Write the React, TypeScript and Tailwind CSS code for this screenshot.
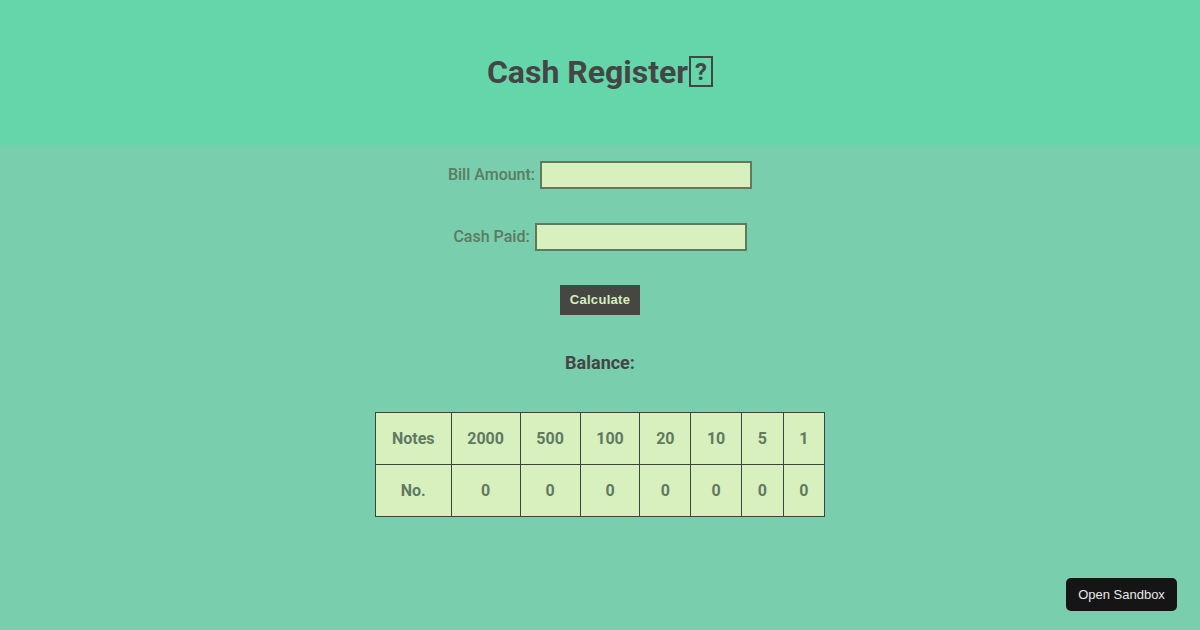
import { useState } from "react";

const notes = [2000, 500, 100, 20, 10, 5, 1];

export default function App() {
	const [bill, setBill] = useState("");
	const [cash, setCash] = useState("");
	const [counts, setCounts] = useState<number[]>(notes.map(() => 0));

	const calculate = () => {
		let rest = Number(cash) - Number(bill);
		if (!(rest > 0)) {
			setCounts(notes.map(() => 0));
			return;
		}
		setCounts(
			notes.map((n) => {
				const c = Math.floor(rest / n);
				rest -= c * n;
				return c;
			}),
		);
	};

	return (
		<div className="min-h-[630px] bg-[#79cead] font-['Roboto',sans-serif]">
			{/* Header */}
			<header className="flex h-[145px] items-center justify-center bg-[#64d6a9] pb-[2px]">
				<h1 className="flex items-center text-[32px] font-bold text-[#454545]">
					Cash Register
					{/* missing-glyph box */}
					<span className="ml-[1px] flex h-[31px] w-[24px] items-center justify-center border-2 border-[#454545] text-[24px] leading-none">
						?
					</span>
				</h1>
			</header>

			{/* Form */}
			<main className="flex flex-col items-center">
				<div className="mt-4 flex items-center gap-[5px]">
					<label className="text-base font-medium text-[#5c7b61]">Bill Amount:</label>
					<input
						value={bill}
						onChange={(e) => setBill(e.target.value)}
						className="h-[28px] w-[212px] border-2 border-[#5f7a5c] bg-[#d8efbe] px-1 outline-none"
					/>
				</div>
				<div className="mt-[34px] flex items-center gap-[5px]">
					<label className="text-base font-medium text-[#5c7b61]">Cash Paid:</label>
					<input
						value={cash}
						onChange={(e) => setCash(e.target.value)}
						className="h-[28px] w-[212px] border-2 border-[#5f7a5c] bg-[#d8efbe] px-1 outline-none"
					/>
				</div>
				<button
					onClick={calculate}
					className="mt-[34px] h-[30px] w-[80px] bg-[#464743] font-['Liberation_Sans',sans-serif] text-[13px] font-bold tracking-[0.3px] text-[#d8efbe]"
				>
					Calculate
				</button>
				<h2 className="mt-[34px] text-lg font-bold text-[#454545]">Balance:</h2>

				<table className="mt-[35px] border-collapse bg-[#d8efbe] text-base font-bold text-[#5f7a60]">
					<tbody>
						<tr>
							<th className="border border-[#3d463d] px-4 py-4 leading-[19px]">Notes</th>
							{notes.map((n) => (
								<td key={n} className="border border-[#3d463d] px-[15.7px] py-4 text-center leading-[19px]">
									{n}
								</td>
							))}
						</tr>
						<tr>
							<th className="border border-[#3d463d] px-4 py-4 leading-[19px]">No.</th>
							{counts.map((c, i) => (
								<td key={i} className="border border-[#3d463d] px-[15.7px] py-4 text-center leading-[19px]">
									{c}
								</td>
							))}
						</tr>
					</tbody>
				</table>
			</main>

			<button className="fixed bottom-[19px] right-[23px] h-[33px] w-[111px] rounded-[5px] bg-[#151515] font-['Liberation_Sans',sans-serif] text-[13px] text-[#e8e8e8]">
				Open Sandbox
			</button>
		</div>
	);
}
